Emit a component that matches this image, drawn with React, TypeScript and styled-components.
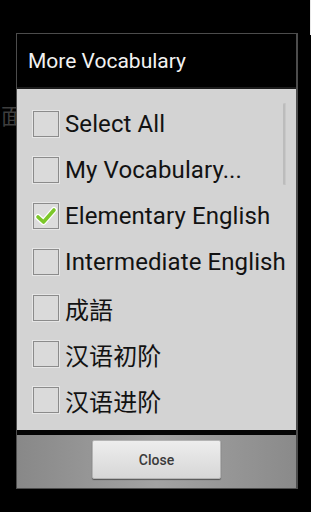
import React from 'react'
import styled, {createGlobalStyle, css} from 'styled-components'

const GlobalStyle = createGlobalStyle`
    html, body {
        margin: 0;
        padding: 0;
        background: #000;
    }
    body {
        font-family: Roboto, "Noto Sans CJK SC", sans-serif;
    }
`

const Screen = styled.div`
    position: relative;
    width: 311px;
    height: 512px;
    background: #000;
    overflow: hidden;
    display: flex;
    flex-direction: row;
    justify-content: space-between;
`

const BackdropText = styled.div`
    padding: 101px 0 0 1px;
    font-size: 22px;
    line-height: 26px;
    color: #3e3e3e;
    font-family: "Noto Sans CJK SC", sans-serif;
`

const EdgeLine = styled.div`
    width: 1px;
    height: 35px;
    background: #e8e8e8;
`

// the dialog floats over the page behind it
const Dialog = styled.div`
    position: absolute;
    left: 16px;
    top: 33px;
    width: 279px;
    border: 1px solid #4c4c4c;
    border-right-width: 2px;
    background: #000;
    display: flex;
    flex-direction: column;
`

const TitleBar = styled.div`
    height: 53px;
    padding-left: 11px;
    display: flex;
    align-items: center;
    color: #f2f2f2;
    font-size: 21px;
    border-bottom: 2px solid #1c1c1c;
`

const List = styled.div`
    position: relative;
    height: 329px;
    padding: 12px 0 0 16px;
    background: #d3d3d3;
`

const ScrollThumb = styled.div`
    position: absolute;
    top: 14px;
    right: 10px;
    width: 3px;
    height: 82px;
    border-radius: 2px;
    background: #bcbcbc;
    box-shadow: inset -1px 0 0 #c8c8c8;
`

const Row = styled.div`
    height: 46px;
    display: flex;
    flex-direction: row;
    align-items: center;
    gap: 6px;
`

const Box = styled.div<{checked: boolean}>`
    width: 24px;
    height: 24px;
    border: 1px solid #8b8b8b;
    background: #dadada;
    box-shadow: 0 0 0 1px #e6e6e6;
    display: flex;
    align-items: center;
    justify-content: center;

    ${(props) =>
        props.checked &&
        css`
            background: #dcdcdc;
        `}
`

const Label = styled.div`
    font-size: 24px;
    color: #121212;
    white-space: nowrap;
    letter-spacing: 0.1px;
`

const Divider = styled.div`
    height: 5px;
    background: #050505;
`

const Footer = styled.div`
    height: 53px;
    display: flex;
    justify-content: center;
    align-items: flex-start;
    padding-top: 5px;
    box-sizing: border-box;
    background: linear-gradient(to right, #888888, #a3a3a3 50%, #8a8a8a);
`

const CloseButton = styled.button`
    width: 129px;
    height: 39px;
    border: 1px solid #b4b4b4;
    border-radius: 2px;
    background: linear-gradient(#ededed, #d7d7d7);
    box-shadow: 0 1px 1px rgba(0, 0, 0, 0.45);
    font-family: Roboto, sans-serif;
    font-size: 14px;
    font-weight: 500;
    color: #3a3a3a;
    padding: 0;
`

const Check = () => (
    <svg width="22" height="20" viewBox="0 0 22 20">
        <path
            d="M3 11 L8.5 16 L19 4"
            fill="none"
            stroke="#ffffff"
            strokeWidth="6"
            strokeLinecap="round"
            strokeLinejoin="round"
        />
        <path
            d="M3 11 L8.5 16 L19 4"
            fill="none"
            stroke="#7cc72a"
            strokeWidth="3.6"
            strokeLinecap="round"
            strokeLinejoin="round"
        />
    </svg>
)

const items = [
    {label: 'Select All', checked: false},
    {label: 'My Vocabulary...', checked: false},
    {label: 'Elementary English', checked: true},
    {label: 'Intermediate English', checked: false},
    {label: '成語', checked: false},
    {label: '汉语初阶', checked: false},
    {label: '汉语进阶', checked: false},
]

export default function App() {
    return (
        <Screen>
            <GlobalStyle />
            <BackdropText>面</BackdropText>
            <EdgeLine />
            <Dialog>
                <TitleBar>More Vocabulary</TitleBar>
                <List>
                    <ScrollThumb />
                    {items.map((item) => (
                        <Row key={item.label}>
                            <Box checked={item.checked}>
                                {item.checked && <Check />}
                            </Box>
                            <Label>{item.label}</Label>
                        </Row>
                    ))}
                </List>
                <Divider />
                <Footer>
                    <CloseButton>Close</CloseButton>
                </Footer>
            </Dialog>
        </Screen>
    )
}
